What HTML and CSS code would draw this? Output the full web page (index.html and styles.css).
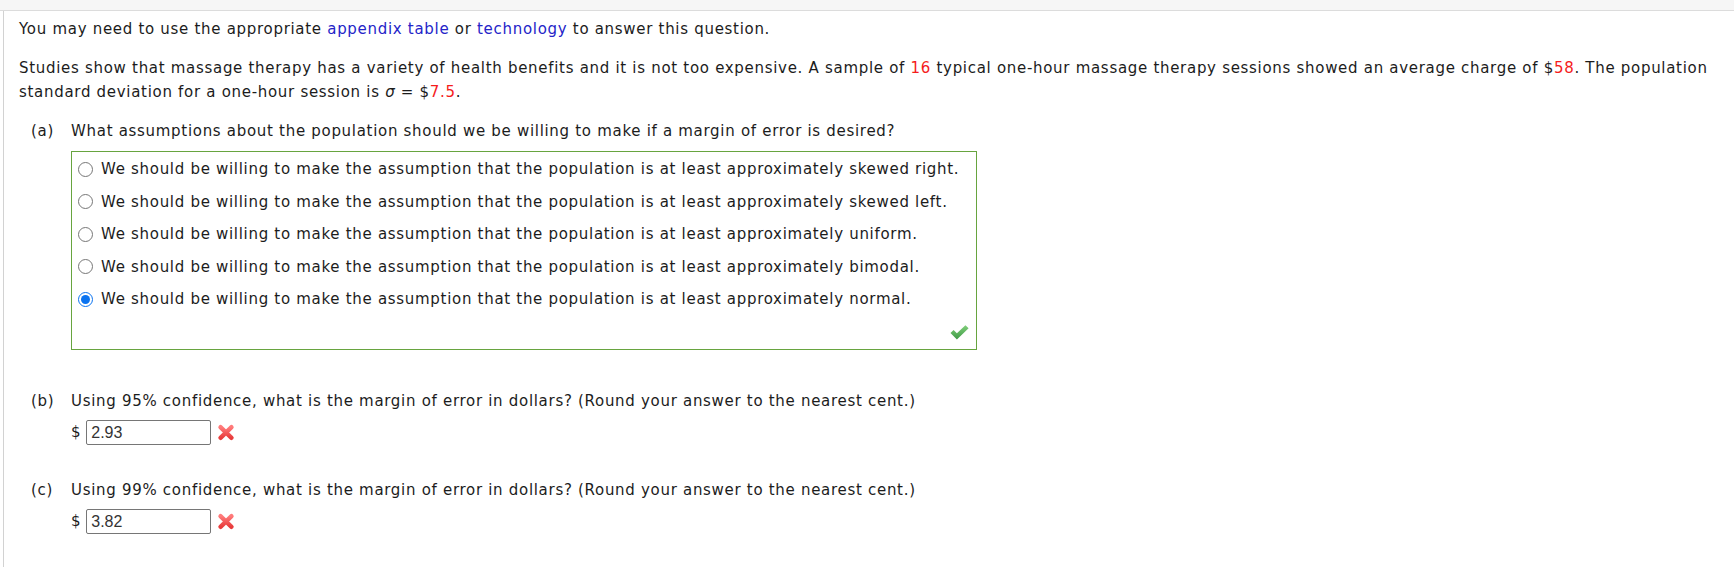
FILE: index.html
```html
<!DOCTYPE html>
<html>
<head>
<meta charset="utf-8">
<link rel="stylesheet" href="styles.css">
</head>
<body>
<div class="topbar"></div>
<div class="main">
  <p class="intro">You may need to use the appropriate <a class="link" href="#">appendix table</a> or <a class="link" href="#">technology</a> to answer this question.</p>
  <p class="stem">Studies show that massage therapy has a variety of health benefits and it is not too expensive. A sample of <span class="red">16</span> typical one-hour massage therapy sessions showed an average charge of $<span class="red">58</span>. The population<br>standard deviation for a one-hour session is <i class="sym">σ</i> = $<span class="red">7.5</span>.</p>

  <div class="part">
    <div class="plabel">(a)</div>
    <div class="pbody">
      <div class="qtext">What assumptions about the population should we be willing to make if a margin of error is desired?</div>
      <div class="choices">
        <label class="opt"><input type="radio" name="a" class="radio"><span>We should be willing to make the assumption that the population is at least approximately skewed right.</span></label>
        <label class="opt"><input type="radio" name="a" class="radio"><span>We should be willing to make the assumption that the population is at least approximately skewed left.</span></label>
        <label class="opt"><input type="radio" name="a" class="radio"><span>We should be willing to make the assumption that the population is at least approximately uniform.</span></label>
        <label class="opt"><input type="radio" name="a" class="radio"><span>We should be willing to make the assumption that the population is at least approximately bimodal.</span></label>
        <label class="opt"><input type="radio" name="a" class="radio" checked><span>We should be willing to make the assumption that the population is at least approximately normal.</span></label>
        <div class="mark">
          <svg class="check" width="19" height="15" viewBox="0 0 19 15">
            <defs>
              <linearGradient id="cg" x1="0" y1="0" x2="0" y2="1">
                <stop offset="0" stop-color="#80cf7a"/>
                <stop offset="1" stop-color="#3f9a46"/>
              </linearGradient>
            </defs>
            <path d="M0.5 8 L3.6 5.1 L6.9 8.2 L15.4 0.3 L18.6 3.3 L6.9 14.4 Z" fill="url(#cg)"/>
          </svg>
        </div>
      </div>
    </div>
  </div>

  <div class="part part-b">
    <div class="plabel">(b)</div>
    <div class="pbody">
      <div class="qtext">Using 95% confidence, what is the margin of error in dollars? (Round your answer to the nearest cent.)</div>
      <div class="answer">
        <span class="dollar">$</span>
        <input class="field" type="text" value="2.93">
        <svg class="cross" width="18" height="17" viewBox="0 0 18 17">
          <defs>
            <linearGradient id="xg" x1="0" y1="0" x2="0" y2="1">
              <stop offset="0" stop-color="#ff7a7a"/>
              <stop offset="1" stop-color="#e83c3c"/>
            </linearGradient>
          </defs>
          <path d="M3.5 3.2 L14.5 13.8 M14.5 3.2 L3.5 13.8" stroke="url(#xg)" stroke-width="4.4" stroke-linecap="round" fill="none"/>
        </svg>
      </div>
    </div>
  </div>

  <div class="part part-c">
    <div class="plabel">(c)</div>
    <div class="pbody">
      <div class="qtext">Using 99% confidence, what is the margin of error in dollars? (Round your answer to the nearest cent.)</div>
      <div class="answer">
        <span class="dollar">$</span>
        <input class="field" type="text" value="3.82">
        <svg class="cross" width="18" height="17" viewBox="0 0 18 17">
          <defs>
            <linearGradient id="xg2" x1="0" y1="0" x2="0" y2="1">
              <stop offset="0" stop-color="#ff7a7a"/>
              <stop offset="1" stop-color="#e83c3c"/>
            </linearGradient>
          </defs>
          <path d="M3.5 3.2 L14.5 13.8 M14.5 3.2 L3.5 13.8" stroke="url(#xg2)" stroke-width="4.4" stroke-linecap="round" fill="none"/>
        </svg>
      </div>
    </div>
  </div>
</div>
</body>
</html>
```

FILE: styles.css
```css
html, body {
  margin: 0;
  padding: 0;
  background: #ffffff;
}
body {
  font-family: "DejaVu Sans", Verdana, sans-serif;
  font-size: 15px;
  line-height: 24px;
  letter-spacing: 0.7px;
  color: #1c1c1c;
  height: 567px;
  overflow: hidden;
}
.topbar {
  height: 10px;
  background: #f6f6f6;
  border-bottom: 1px solid #dcdcdc;
}
.main {
  margin-left: 3px;
  border-left: 1px solid #d2d2d2;
  padding: 6px 0 0 15px;
  height: 556px;
  box-sizing: border-box;
}
p {
  margin: 0;
}
.intro {
  margin-bottom: 15px;
}
.stem {
  margin-bottom: 15px;
}
.link {
  color: #2424c8;
  text-decoration: none;
}
.red {
  color: #f51c1c;
}
.sym {
  font-style: italic;
}
.part {
  display: grid;
  grid-template-columns: 40px auto;
  padding-left: 12px;
}
.plabel {
  white-space: nowrap;
}
.choices {
  margin-top: 8px;
  width: 906px;
  box-sizing: border-box;
  border: 1px solid #67a43f;
  padding: 1px 7px 0 6px;
}
.opt {
  display: flex;
  align-items: center;
  height: 32.5px;
  white-space: nowrap;
}
.radio {
  width: 15px;
  height: 15px;
  margin: 0 8px 0 0;
  accent-color: #0a73f0;
}
.mark {
  display: flex;
  justify-content: flex-end;
  height: 33px;
  padding-top: 9px;
  box-sizing: border-box;
}
.check {
  display: block;
}
.part-b {
  margin-top: 39px;
}
.part-c {
  margin-top: 33px;
}
.answer {
  display: flex;
  align-items: center;
  margin-top: 7px;
  height: 25px;
}
.dollar {
  margin-right: 5px;
}
.field {
  width: 125px;
  height: 25px;
  box-sizing: border-box;
  border: 1px solid #767676;
  border-radius: 2px;
  padding: 1px 4px 0 4px;
  font-family: "Liberation Sans", Arial, sans-serif;
  font-size: 16px;
  letter-spacing: 0;
  color: #333333;
  margin: 0;
}
.cross {
  display: block;
  margin-left: 6px;
}
```
